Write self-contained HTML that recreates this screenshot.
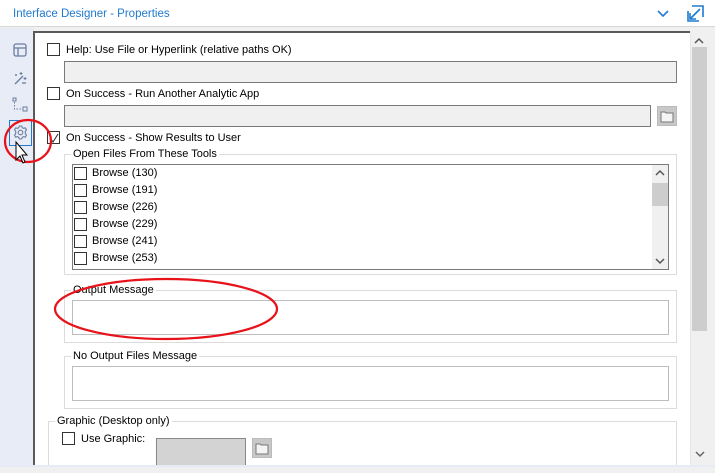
<!DOCTYPE html>
<html style="overflow:hidden;width:715px;height:473px"><head><meta charset="utf-8"><style>
*{box-sizing:border-box;margin:0;padding:0}
body{width:715px;height:473px;overflow:hidden;background:#f0f0f0;font-family:"Liberation Sans",sans-serif;font-size:11px;color:#000;position:relative}
.a{position:absolute}
.cb{position:absolute;width:13px;height:13px;border:1px solid #333;background:#fff}
.t{position:absolute;white-space:nowrap;line-height:13px}
.inp{position:absolute;background:#f0f0f0;border:1px solid #7a7a7a}
.fs{position:absolute;border:1px solid #dcdcdc}
.lg{position:absolute;background:#fff;padding:0 2px;white-space:nowrap;line-height:13px}
.wb{position:absolute;background:#fff;border:1px solid #bdbdbd}
.fold{position:absolute;width:20px;height:20px;background:#c8c8c8;border:1px solid #bbb}
</style></head><body>
<div class="a" style="left:0;top:0;width:715px;height:27px;background:#fff;border-bottom:1px solid #d6d6d6"></div>
<div class="t" style="left:13px;top:8px;color:#1f7ad0;font-size:11.5px">Interface Designer - Properties</div>
<svg class="a" style="left:656px;top:8px" width="14" height="10"><path d="M2 3 L7 8 L12 3" stroke="#1f7ad0" stroke-width="1.6" fill="none"/></svg>
<svg class="a" style="left:686px;top:4px" width="20" height="20"><path d="M6 2 H17 V13 M2 7 V17 H13" stroke="#1f7ad0" stroke-width="1.6" fill="none"/><path d="M14 5 L4 15 M4 9 V15 H10" stroke="#1f7ad0" stroke-width="1.6" fill="none"/></svg>
<div class="a" style="left:0;top:28px;width:34px;height:437px;background:#e8ecf6"></div>
<!-- sidebar icons -->
<svg class="a" style="left:13px;top:43px" width="14" height="14"><rect x="1" y="1" width="12" height="12" rx="2" stroke="#6a7da0" stroke-width="1.3" fill="none"/><path d="M1 5 H13 M5 5 V13" stroke="#6a7da0" stroke-width="1.3"/></svg>
<svg class="a" style="left:12px;top:70px" width="16" height="16"><path d="M3 14 L11 6" stroke="#6a7da0" stroke-width="1.3"/><path d="M9 2 V5 M7.5 3.5 H10.5 M13 7 V10 M11.5 8.5 H14.5 M4 4 V6 M3 5 H5" stroke="#6a7da0" stroke-width="1"/><path d="M10 13 H14" stroke="#6a7da0" stroke-width="1.3"/></svg>
<svg class="a" style="left:12px;top:97px" width="16" height="16"><rect x="1" y="1" width="3" height="3" stroke="#6a7da0" fill="none"/><rect x="11" y="10" width="4" height="4" stroke="#6a7da0" fill="none"/><path d="M2.5 5 V12 H10" stroke="#6a7da0" stroke-dasharray="1.5 1.5" fill="none"/></svg>
<div class="a" style="left:9px;top:120px;width:23px;height:26px;border:1px solid #1f7ad0"></div>
<svg class="a" style="left:12px;top:124px" width="17" height="17"><circle cx="8.5" cy="8.5" r="2.3" stroke="#6a7da0" stroke-width="1.1" fill="none"/><path d="M7.3 2 H9.7 L10.2 3.6 L11.7 4.4 L13.3 3.8 L14.5 5.9 L13.3 7.2 V9.8 L14.5 11.1 L13.3 13.2 L11.7 12.6 L10.2 13.4 L9.7 15 H7.3 L6.8 13.4 L5.3 12.6 L3.7 13.2 L2.5 11.1 L3.7 9.8 V7.2 L2.5 5.9 L3.7 3.8 L5.3 4.4 L6.8 3.6 Z" stroke="#6a7da0" stroke-width="1.1" fill="none" stroke-linejoin="round"/></svg>
<!-- panel -->
<div class="a" style="left:33px;top:31px;width:657px;height:434px;background:#fff;border-left:2px solid #5a5a5a;border-top:2px solid #5a5a5a"></div>
<!-- main scrollbar -->
<div class="a" style="left:690px;top:31px;width:18px;height:434px;background:#f0f0f0;border-left:1px solid #e6e6e6"></div>
<div class="a" style="left:692px;top:47px;width:15px;height:284px;background:#cdcdcd"></div>
<svg class="a" style="left:695px;top:451px" width="10" height="8"><path d="M1 1 L5 5 L9 1" stroke="#666" stroke-width="1.5" fill="none"/></svg>
<svg class="a" style="left:694px;top:37px" width="10" height="8"><path d="M1 6 L5 2 L9 6" stroke="#555" stroke-width="1.5" fill="none"/></svg>

<div class="cb" style="left:47px;top:43px"></div><div class="t" style="left:66px;top:44px">Help: Use File or Hyperlink (relative paths OK)</div>
<div class="inp" style="left:64px;top:61px;width:613px;height:22px"></div>
<div class="cb" style="left:47px;top:87px"></div><div class="t" style="left:66px;top:88px">On Success - Run Another Analytic App</div>
<div class="inp" style="left:64px;top:105px;width:587px;height:22px"></div>
<div class="fold" style="left:657px;top:106px"><svg width="18" height="18"><path d="M3 5 H7 L8 6 H15 V15 H3 Z" fill="#f4f4f4" stroke="#777"/></svg></div>
<div class="cb" style="left:47px;top:131px"></div>
<svg class="a" style="left:48px;top:132px" width="12" height="12"><path d="M2 6 L5 10 L10 2" stroke="#333" stroke-width="1.1" fill="none"/></svg>
<div class="t" style="left:66px;top:132px">On Success - Show Results to User</div>

<div class="fs" style="left:64px;top:154px;width:613px;height:121px"></div>
<div class="lg" style="left:71px;top:148px">Open Files From These Tools</div>
<div class="a" style="left:72px;top:164px;width:597px;height:106px;border:1px solid #7a7a7a;background:#fff"></div>
<div class="a" style="left:652px;top:165px;width:16px;height:104px;background:#f0f0f0"></div>
<div class="a" style="left:652px;top:183px;width:16px;height:23px;background:#cdcdcd"></div>
<svg class="a" style="left:655px;top:169px" width="10" height="8"><path d="M1 6 L5 2 L9 6" stroke="#555" stroke-width="1.5" fill="none"/></svg>
<svg class="a" style="left:655px;top:257px" width="10" height="8"><path d="M1 2 L5 6 L9 2" stroke="#555" stroke-width="1.5" fill="none"/></svg>
<div class="cb" style="left:74px;top:167px"></div><div class="t" style="left:92px;top:167px">Browse (130)</div>
<div class="cb" style="left:74px;top:184px"></div><div class="t" style="left:92px;top:184px">Browse (191)</div>
<div class="cb" style="left:74px;top:201px"></div><div class="t" style="left:92px;top:201px">Browse (226)</div>
<div class="cb" style="left:74px;top:218px"></div><div class="t" style="left:92px;top:218px">Browse (229)</div>
<div class="cb" style="left:74px;top:235px"></div><div class="t" style="left:92px;top:235px">Browse (241)</div>
<div class="cb" style="left:74px;top:252px"></div><div class="t" style="left:92px;top:252px">Browse (253)</div>

<div class="fs" style="left:64px;top:290px;width:613px;height:53px"></div>
<div class="lg" style="left:71px;top:284px">Output Message</div>
<div class="wb" style="left:72px;top:300px;width:597px;height:35px"></div>

<div class="fs" style="left:64px;top:356px;width:613px;height:53px"></div>
<div class="lg" style="left:71px;top:350px">No Output Files Message</div>
<div class="wb" style="left:72px;top:366px;width:597px;height:35px"></div>

<div class="fs" style="left:48px;top:421px;width:629px;height:46px"></div>
<div class="lg" style="left:55px;top:415px">Graphic (Desktop only)</div>
<div class="cb" style="left:62px;top:432px"></div><div class="t" style="left:81px;top:433px">Use Graphic:</div>
<div class="a" style="left:156px;top:438px;width:90px;height:30px;background:#d3d3d3;border:1px solid #888"></div>
<div class="fold" style="left:252px;top:438px"><svg width="18" height="18"><path d="M3 5 H7 L8 6 H15 V15 H3 Z" fill="#f4f4f4" stroke="#777"/></svg></div>
<div class="a" style="left:0;top:465px;width:715px;height:8px;background:#f0f0f0;border-top:2px solid #e6ebf5"></div>

<svg class="a" style="left:0;top:0" width="715" height="473"><ellipse cx="28" cy="141" rx="23" ry="21" stroke="#e8121a" stroke-width="2.2" fill="none"/><ellipse cx="166" cy="309" rx="111" ry="30" stroke="#e8121a" stroke-width="2.2" fill="none"/>
<path d="M16 142 L16 160 L20 156 L23 163 L25 162 L22 155 L27 155 Z" fill="#fff" stroke="#000" stroke-width="1"/></svg>
</body></html>
